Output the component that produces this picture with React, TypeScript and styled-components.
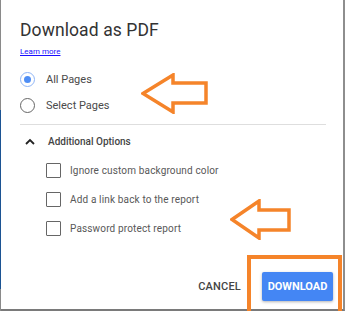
import { FC } from "react"
import styled, { createGlobalStyle } from "styled-components"

const GlobalStyle = createGlobalStyle`
  html, body {
    margin: 0;
    padding: 0;
    background: #fff;
  }
  body {
    font-family: Roboto, "Liberation Sans", sans-serif;
  }
`

const Page = styled.div`
  width: 345px;
  height: 311px;
  box-sizing: border-box;
  padding-left: 1px;
  background: linear-gradient(
    to bottom,
    #8a8a8a 0 110px,
    #1c5493 110px 289px,
    #8a8a8a 289px
  );
  overflow: hidden;
`

const Dialog = styled.div`
  position: relative;
  height: 100%;
  box-sizing: border-box;
  background: #fff;
  border-right: 2px solid #8e8e8e;
  border-bottom: 2px solid #7a7a7a;
  padding: 20px 19px 0 19px;
  display: flex;
  flex-direction: column;
`

const Title = styled.h2`
  margin: 0;
  font-size: 17.5px;
  font-weight: 400;
  line-height: 20px;
  color: #333;
  letter-spacing: 0.1px;
`

const LearnMore = styled.a`
  margin-top: 7px;
  font-size: 8px;
  line-height: 10px;
  color: #1a0dff;
  text-decoration: underline;
  align-self: flex-start;
`

const RadioGroup = styled.div`
  margin-top: 14px;
  display: flex;
  flex-direction: column;
  gap: 10px;
  padding-bottom: 11px;
  border-bottom: 1px solid #dedede;
  margin-right: -2px;
`

const RadioRow = styled.label`
  display: flex;
  align-items: center;
  gap: 11px;
  height: 16px;
  font-size: 11px;
  color: #4a4a4a;
`

const RadioCircle = styled.span<{ checked?: boolean }>`
  width: 15px;
  height: 15px;
  box-sizing: border-box;
  border-radius: 50%;
  border: 1.5px solid ${({ checked }) => (checked ? "#8fb5f7" : "#666")};
  display: flex;
  align-items: center;
  justify-content: center;
  flex-shrink: 0;

  &::after {
    content: "";
    display: ${({ checked }) => (checked ? "block" : "none")};
    width: 7px;
    height: 7px;
    border-radius: 50%;
    background: #4f8ef5;
  }
`

const OptionsHeader = styled.div`
  margin-top: 8px;
  display: flex;
  align-items: center;
  gap: 13px;
  height: 16px;
  padding-left: 5px;
  font-size: 10px;
  font-weight: 500;
  color: #444;
`

const CheckList = styled.div`
  margin-top: 13px;
  padding-left: 26px;
  display: flex;
  flex-direction: column;
  gap: 13px;
`

const CheckRow = styled.label`
  display: flex;
  align-items: center;
  gap: 9px;
  height: 16px;
  font-size: 10px;
  color: #585858;
  letter-spacing: 0.15px;
`

const CheckBox = styled.span`
  width: 15px;
  height: 15px;
  box-sizing: border-box;
  border: 1px solid #666;
  border-radius: 1px;
  flex-shrink: 0;
`

const Footer = styled.div`
  margin-top: auto;
  margin-bottom: 8px;
  margin-right: -9px;
  display: flex;
  justify-content: flex-end;
  align-items: center;
  gap: 21px;
`

const TextButton = styled.button`
  border: 0;
  background: none;
  padding: 0;
  font-family: inherit;
  font-size: 11px;
  font-weight: 500;
  color: #444;
  letter-spacing: 0.2px;
`

const PrimaryButton = styled.button`
  width: 71px;
  height: 29px;
  border: 0;
  border-radius: 2px;
  background: #4486f4;
  color: #fff;
  font-family: inherit;
  font-size: 11px;
  font-weight: 700;
  padding: 0;
  box-shadow: 0 1px 3px rgba(0, 0, 0, 0.3);
`

const Highlight = styled.div`
  position: absolute;
  left: 246px;
  top: 255px;
  width: 95px;
  height: 60px;
  box-sizing: border-box;
  border: 4px solid #f5842a;
  pointer-events: none;
`

const ArrowSvg = styled.svg<{ $left: number; $top: number }>`
  position: absolute;
  left: ${({ $left }) => $left}px;
  top: ${({ $top }) => $top}px;
  pointer-events: none;
`

const Chevron: FC = () => (
  <svg width="10" height="7" viewBox="0 0 10 7">
    <path d="M1 6 L5 2 L9 6" fill="none" stroke="#222" strokeWidth="1.8" />
  </svg>
)

interface ArrowProps {
  left: number
  top: number
  width: number
  height: number
  head: number
  shaftTop: number
  shaftBottom: number
}

// left-pointing outline arrow, coordinates local to the svg box
const Arrow: FC<ArrowProps> = ({ left, top, width, height, head, shaftTop, shaftBottom }) => {
  const mid = height / 2
  const pts = [
    [2, mid],
    [head, 2],
    [head, shaftTop],
    [width - 2, shaftTop],
    [width - 2, shaftBottom],
    [head, shaftBottom],
    [head, height - 2],
  ]
    .map((p) => p.join(","))
    .join(" ")
  return (
    <ArrowSvg $left={left} $top={top} width={width} height={height}>
      <polygon points={pts} fill="none" stroke="#f5842a" strokeWidth="3.5" strokeLinejoin="miter" />
    </ArrowSvg>
  )
}

export default function App() {
  return (
    <Page>
      <GlobalStyle />
      <Dialog>
        <Title>Download as PDF</Title>
        <LearnMore href="#">Learn more</LearnMore>
        <RadioGroup>
          <RadioRow>
            <RadioCircle checked />
            All Pages
          </RadioRow>
          <RadioRow>
            <RadioCircle />
            Select Pages
          </RadioRow>
        </RadioGroup>
        <OptionsHeader>
          <Chevron />
          Additional Options
        </OptionsHeader>
        <CheckList>
          <CheckRow>
            <CheckBox />
            Ignore custom background color
          </CheckRow>
          <CheckRow>
            <CheckBox />
            Add a link back to the report
          </CheckRow>
          <CheckRow>
            <CheckBox />
            Password protect report
          </CheckRow>
        </CheckList>
        <Footer>
          <TextButton>CANCEL</TextButton>
          <PrimaryButton>DOWNLOAD</PrimaryButton>
        </Footer>
        <Highlight />
        <Arrow left={140} top={73} width={67} height={41} head={32} shaftTop={10} shaftBottom={30} />
        <Arrow left={229} top={199} width={61} height={41} head={29} shaftTop={11} shaftBottom={31} />
      </Dialog>
    </Page>
  )
}
